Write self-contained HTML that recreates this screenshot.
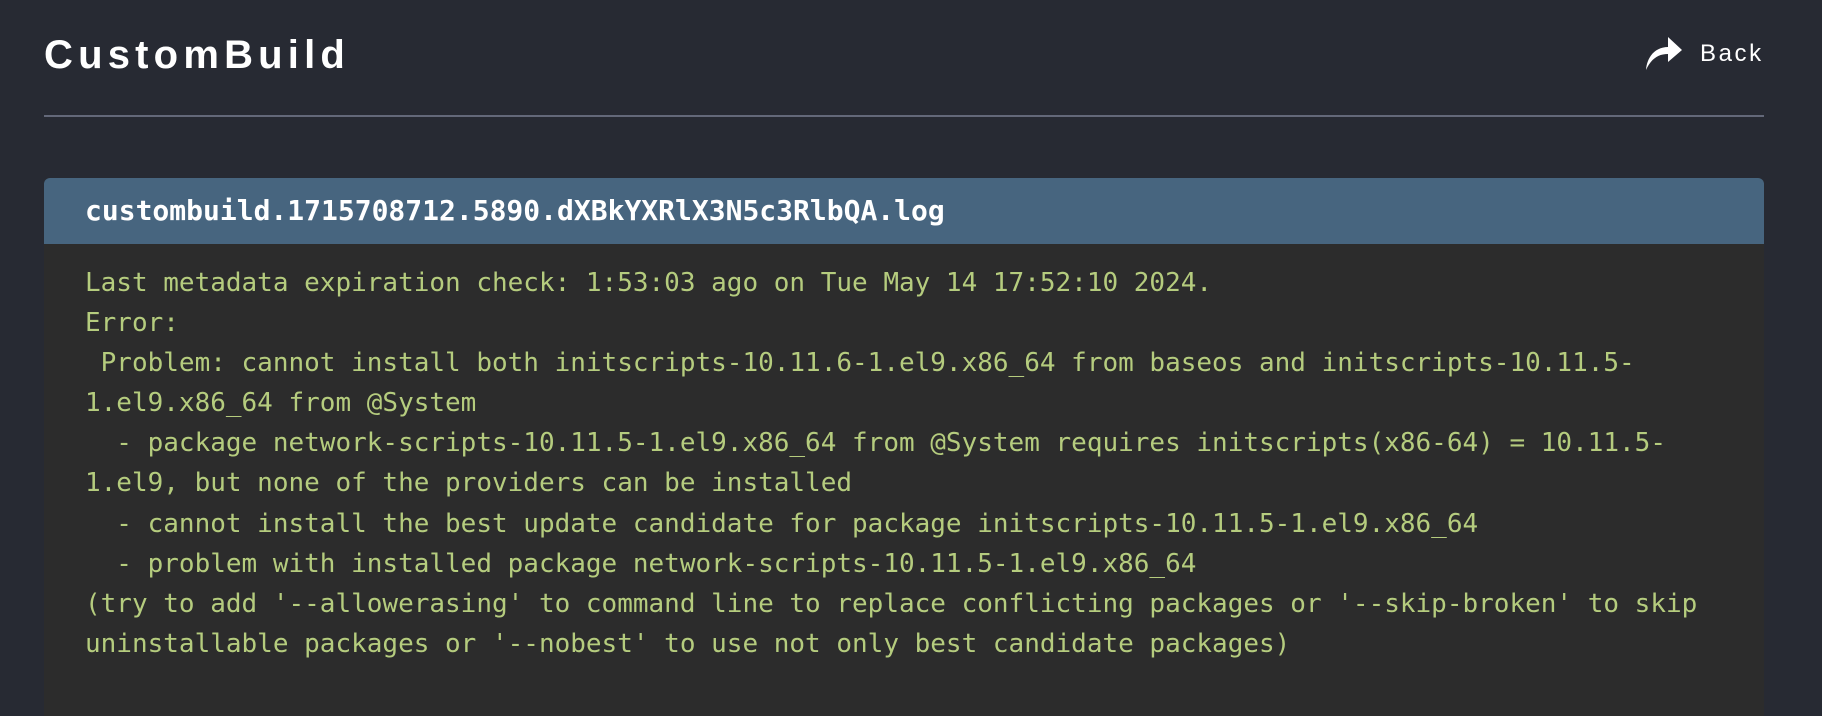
<!DOCTYPE html>
<html><head><meta charset="utf-8"><style>
html,body{margin:0;padding:0;width:1822px;height:716px;overflow:hidden;background:#272a33;}
.title{position:absolute;left:44px;top:28px;font:bold 40px/54px "Liberation Sans",sans-serif;color:#fff;letter-spacing:5.2px;}
.back{position:absolute;left:1644px;top:36px;font:24px/36px "Liberation Sans",sans-serif;color:#fff;letter-spacing:2.6px;}
.back svg{position:absolute;left:0;top:-3px;}
.back span{position:absolute;left:56px;top:0;}
.line{position:absolute;left:44px;top:115px;width:1720px;height:2px;background:#636879;}
.panel{position:absolute;left:44px;top:178px;width:1720px;height:538px;background:#2c2c2c;border-radius:6px 6px 0 0;overflow:hidden;}
.hdr{height:66px;background:#47657f;color:#fff;font:bold 28px/66px "DejaVu Sans Mono","Liberation Mono",monospace;padding-left:41px;}
pre{margin:0;padding:19px 0 0 41px;color:#b5cc7e;font:26px/40.1px "DejaVu Sans Mono","Liberation Mono",monospace;}
</style></head><body>
<div class="title">CustomBuild</div>
<div class="back"><svg width="40" height="38" viewBox="0 0 40 38"><path d="M2 37 C3 23 12 14 24 14 L24 4 L38 17 L24 29 L24 21 C14 21 7 26 2 37 Z" fill="#fff"/></svg><span>Back</span></div>
<div class="line"></div>
<div class="panel"><div class="hdr">custombuild.1715708712.5890.dXBkYXRlX3N5c3RlbQA.log</div>
<pre>Last metadata expiration check: 1:53:03 ago on Tue May 14 17:52:10 2024.
Error:
 Problem: cannot install both initscripts-10.11.6-1.el9.x86_64 from baseos and initscripts-10.11.5-
1.el9.x86_64 from @System
  - package network-scripts-10.11.5-1.el9.x86_64 from @System requires initscripts(x86-64) = 10.11.5-
1.el9, but none of the providers can be installed
  - cannot install the best update candidate for package initscripts-10.11.5-1.el9.x86_64
  - problem with installed package network-scripts-10.11.5-1.el9.x86_64
(try to add '--allowerasing' to command line to replace conflicting packages or '--skip-broken' to skip
uninstallable packages or '--nobest' to use not only best candidate packages)</pre></div>
</body></html>
